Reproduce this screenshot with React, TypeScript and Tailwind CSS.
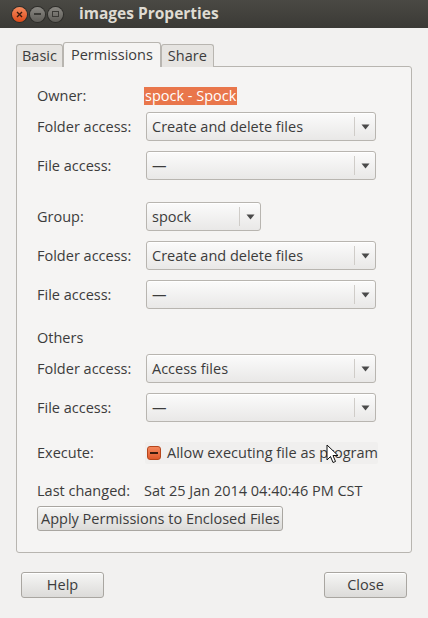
import React from 'react'

const font = { fontFamily: '"Open Sans", "Noto Sans", sans-serif' }

function Combo({ value, wide = true }: { value: string; wide?: boolean }) {
  return (
    <div
      className={`flex h-[29px] items-stretch rounded-[3px] border border-[#b8b5b0] bg-gradient-to-b from-[#fbfbfb] to-[#e9e8e7] shadow-[inset_0_1px_0_#ffffff] ${
        wide ? 'w-[230px]' : 'w-[115px]'
      }`}
    >
      <div className="flex flex-1 items-center pl-[5px] text-[#3c3c3c]">{value}</div>
      <div className="my-[4px] w-px bg-[#cfccc8]" />
      <div className="flex w-[20px] items-center justify-center">
        <svg width="9" height="6" viewBox="0 0 9 6">
          <path d="M0.5 0.5 L8.5 0.5 L4.5 5.5 Z" fill="#4a4a4a" />
        </svg>
      </div>
    </div>
  )
}

function Row({ label, children, className = '' }: { label: string; children: React.ReactNode; className?: string }) {
  return (
    <div className={`flex items-center ${className}`}>
      <div className="w-[109px] shrink-0">{label}</div>
      {children}
    </div>
  )
}

function Button({ children, className = '' }: { children: React.ReactNode; className?: string }) {
  return (
    <div
      className={`flex items-center justify-center rounded-[3px] border border-[#a9a6a1] bg-gradient-to-b from-[#f6f6f5] to-[#dcdbd9] text-[#3c3c3c] shadow-[inset_0_1px_0_#ffffff] ${className}`}
    >
      {children}
    </div>
  )
}

export default function App() {
  return (
    <div className="flex h-[618px] w-[428px] flex-col bg-[#f2f1f0] text-[14.5px] text-[#3c3c3c]" style={font}>
      {/* title bar */}
      <div className="flex h-[28px] shrink-0 items-center bg-gradient-to-b from-[#4a4944] to-[#3b3a36] pl-[12px]">
        <div className="flex items-center gap-[3px]">
          <div className="flex h-[15px] w-[15px] items-center justify-center rounded-full bg-gradient-to-b from-[#f58a5c] to-[#dd4814] shadow-[0_0_0_1px_#2e2d2a]">
            <svg width="7" height="7" viewBox="0 0 7 7">
              <path d="M1 1 L6 6 M6 1 L1 6" stroke="#3a1b0e" strokeWidth="1.4" />
            </svg>
          </div>
          <div className="flex h-[15px] w-[15px] items-center justify-center rounded-full bg-gradient-to-b from-[#8a8883] to-[#5f5d58] shadow-[0_0_0_1px_#2e2d2a]">
            <div className="h-[2px] w-[7px] bg-[#3a3935]" />
          </div>
          <div className="flex h-[15px] w-[15px] items-center justify-center rounded-full bg-gradient-to-b from-[#8a8883] to-[#5f5d58] shadow-[0_0_0_1px_#2e2d2a]">
            <div className="h-[6px] w-[7px] border border-[#3a3935]" />
          </div>
        </div>
        <div className="ml-[16px] text-[15.5px] font-bold text-[#dfdbd2]">images Properties</div>
      </div>

      <div className="flex flex-1 flex-col px-[16px] pt-[15px]">
        {/* tabs */}
        <div className="relative z-10 flex h-[24px] items-end">
          <div className="flex h-[23px] items-center rounded-t-[3px] border border-b-0 border-[#b8b5b0] bg-[#e6e4e1] px-[5px]">
            Basic
          </div>
          <div className="flex h-[25px] items-center rounded-t-[3px] border border-b-0 border-[#b8b5b0] bg-[#f5f4f3] px-[7px]">
            Permissions
          </div>
          <div className="flex h-[23px] items-center rounded-t-[3px] border border-b-0 border-[#b8b5b0] bg-[#e6e4e1] px-[6px]">
            Share
          </div>
        </div>

        {/* notebook page */}
        <div className="-mt-px flex h-[487px] flex-col rounded-b-[3px] rounded-tr-[3px] border border-[#b8b5b0] bg-[#f5f4f3] pl-[20px] pt-[20px]">
          <Row label="Owner:" className="h-[18px]">
            <span className="ml-[-2px] bg-[#e9764b] px-px leading-[18px] text-white">spock - Spock</span>
          </Row>
          <Row label="Folder access:" className="mt-[7px]">
            <Combo value="Create and delete files" />
          </Row>
          <Row label="File access:" className="mt-[10px]">
            <Combo value="—" />
          </Row>

          <Row label="Group:" className="mt-[22px]">
            <Combo value="spock" wide={false} />
          </Row>
          <Row label="Folder access:" className="mt-[10px]">
            <Combo value="Create and delete files" />
          </Row>
          <Row label="File access:" className="mt-[10px]">
            <Combo value="—" />
          </Row>

          <div className="mt-[20px] h-[18px] leading-[18px]">Others</div>
          <Row label="Folder access:" className="mt-[7px]">
            <Combo value="Access files" />
          </Row>
          <Row label="File access:" className="mt-[10px]">
            <Combo value="—" />
          </Row>

          <Row label="Execute:" className="mt-[20px]">
            <div className="relative -ml-[1px] flex h-[22px] w-[233px] items-center rounded-[2px] bg-[#f0efee] pl-[2px]">
              <div className="flex h-[14px] w-[14px] items-center justify-center rounded-[3px] border border-[#b6461c] bg-gradient-to-b from-[#f4875c] to-[#e0592a]">
                <div className="h-[2px] w-[8px] bg-[#3b1a0c]" />
              </div>
              <span className="ml-[6px]">Allow executing file as program</span>
              {/* mouse pointer */}
              <svg className="absolute left-[181px] top-[2px]" width="13" height="20" viewBox="0 0 13 20">
                <path d="M1 1 L1 16 L4.5 12.5 L7 18.5 L9.5 17.5 L7 11.5 L12 11.5 Z" fill="#ffffff" stroke="#111111" strokeWidth="1" strokeLinejoin="round" />
              </svg>
            </div>
          </Row>

          <Row label="Last changed:" className="mt-[18px] h-[18px]">
            <span className="ml-[-2px]">Sat 25 Jan 2014 04:40:46 PM CST</span>
          </Row>

          <Button className="mt-[6px] h-[25px] w-[246px] !justify-start pl-[3px]">
            Apply Permissions to Enclosed Files
          </Button>
        </div>

        {/* bottom buttons */}
        <div className="mt-[19px] flex justify-between px-[5px]">
          <Button className="h-[26px] w-[83px]">Help</Button>
          <Button className="h-[26px] w-[83px]">Close</Button>
        </div>
      </div>
    </div>
  )
}
